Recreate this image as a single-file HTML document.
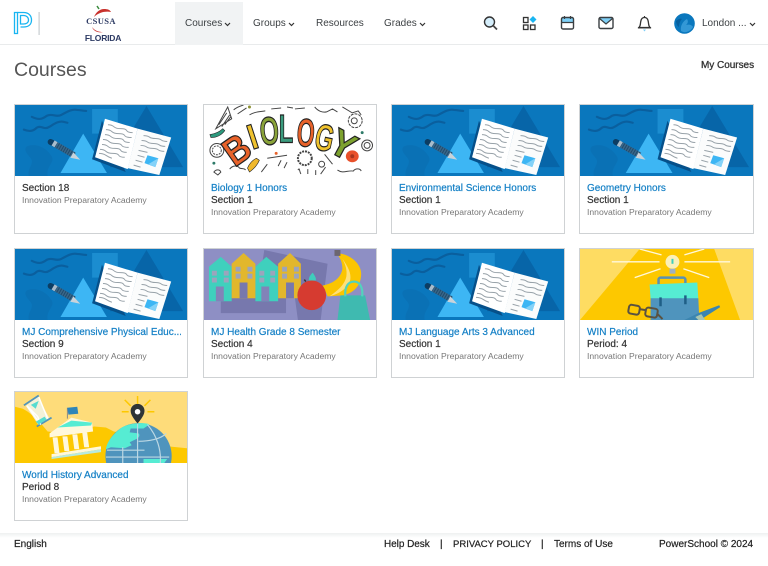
<!DOCTYPE html>
<html><head><meta charset="utf-8"><title>Courses</title>
<style>
*{box-sizing:border-box}
html{background:#fff}
html,body{margin:0;padding:0;width:768px;height:566px;overflow:hidden}
body{background:#fff;font-family:"Liberation Sans",sans-serif;color:#333;filter:blur(.3px)}
.abs,.card,.nav{position:absolute}
.hdr{position:absolute;left:0;top:0;width:768px;height:45px;border-bottom:1px solid #e9ebec;background:#fff}
.nav{top:18px;font-size:10px;line-height:12px;color:#3d4144;white-space:nowrap}
.nav svg{vertical-align:-1px;margin-left:2px}
.card{width:174px;height:130px;border:1px solid #cfd2d4;background:#fff;overflow:hidden}
.card>svg{position:absolute;left:0;top:0;width:172px;height:71px;display:block}
.t{position:absolute;left:7px;right:6px;font-size:10px;line-height:12px;white-space:nowrap;overflow:hidden}
.n{color:#1580c6;top:78px;-webkit-text-stroke:.2px #1580c6}
.s{color:#333;top:90px;-webkit-text-stroke:.2px #333}
.i{color:#777;top:101px;font-size:8.6px}
.f{position:absolute;top:539px;font-size:10px;line-height:12px;color:#222;white-space:nowrap;-webkit-text-stroke:.2px #222}
</style></head><body>
<svg width="0" height="0" style="position:absolute"><defs>
<symbol id="book" viewBox="0 0 174 72">
<rect width="174" height="72" fill="#0a77bd"/>
<path d="M12 42c10-4 20 2 25 10 4 6-6 10-4 20H14c-2-8 6-12 2-18-3-4-8-8-4-12z" fill="#0a71b5"/>
<path d="M78 4h26v25H78z" fill="#1b8dd0"/>
<path d="M133 1l37 62H96z" fill="#0765a8"/>
<path d="M69 29l24 40H46z" fill="#3db6f4"/>
<g fill="none" stroke="#0a5f9e" stroke-width="2.200" stroke-linecap="round"><path d="M17 12c6 3 10 3 15-1 6-3 9 2 15-1 7-4 11-6 16-5 3 0 6 1 9 1"/><path d="M9 25c5 2 9 2 13-2 5-3 7 3 13-1 5-3 9-6 14-5l4 1"/></g>
<path d="M41 40l19 11" stroke="#3a6788" stroke-width="6"/><path d="M41 40l19 11" stroke="#1f4a6c" stroke-width="6" stroke-dasharray="1 1.500"/>
<path d="M36 37.500l3 1.500" stroke="#0c3d63" stroke-width="6" stroke-linecap="round"/><path d="M38.500 38.500l3 1.800" stroke="#a9bccb" stroke-width="6"/>
<path d="M59 48l-3 5.500 10 2z" fill="#c9d3da"/>
<path d="M88 16l-10 39 34 13z" fill="#06508a"/>
<path d="M91 14l33 10-10 41-33-12z" fill="#fff"/><path d="M124 24l34 9-12 38-32-7z" fill="#fbfcfc"/>
<g fill="none" stroke="#98a2a9" stroke-width="1"><path d="M94 20q4 0 6 2t7 2 6 2 6 2M92 25q4 0 6 2t7 2 6 2 7 2M91 30q4 0 6 2t7 2 6 2 6 2M89 35q4 0 6 2t7 2 6 2 7 2M88 40q4 0 6 2t7 2 6 2 6 2M86 45q4 0 6 2t7 2 6 2 6 2M85 49q4 0 7 2t6 3"/><path d="M130 31q4 0 6 1.500t6 1.500 6 1.500 6 1.500M128 36q4 0 6 1.500t6 1.500 6 1.500 6 1.500M127 41q4 0 6 1.500t6 1.500 6 1.500 6 1.500M125 46l9 2M124 51l7 2M122 56l7 2M120 61l7 2"/></g>
<path d="M134 51l11 3-3 9-11-4z" fill="#3db6f4"/><path d="M145 54l-3 9-7-3z" fill="#84d2f8"/>
</symbol>
</defs></svg>

<div class="hdr">
<svg class="abs" style="left:13px;top:11px" width="28" height="26" viewBox="0 0 28 26"><g fill="none" stroke="#19b5f1" stroke-width="1.300"><path d="M1.500 1.500v21h3V1.500z"/><path d="M4.500 1.500h6c5 0 8 3 8 7.500s-3 7-8 7h-3"/><path d="M7.500 4.500h3c3 0 5 2 5 4.500s-2 4-5 4h-3z"/></g><rect x="25.500" y="1" width="1.200" height="23" fill="#c7cdd0"/></svg>
<svg class="abs" style="left:82px;top:4px" width="42" height="38" viewBox="0 0 42 38"><path d="M12 13c2-5 6-8 10-8 4 0 6 1 7 3-5-1-12 0-17 5z" fill="#c8312c"/><path d="M15 2l2 3" stroke="#3a8a3c" stroke-width="1.500"/><path d="M10 23c3 4 7 5 11 5-4 1-9 0-11-5z" fill="#c8312c"/><text x="19" y="20" font-family="'Liberation Serif',serif" font-size="8.500" font-weight="700" letter-spacing=".4" text-anchor="middle" fill="#2c3a63">CSUSA</text><text x="21" y="37" font-size="8.500" font-weight="700" text-anchor="middle" fill="#2c3a63" letter-spacing="-.2">FLORIDA</text></svg>
<div class="abs" style="left:175px;top:2px;width:68px;height:43px;background:#f1f3f4"></div>
<div class="nav" style="left:185px">Courses<svg width="7" height="5" viewBox="0 0 7 5"><path d="M1 1l2.500 2.500L6 1" fill="none" stroke="#333" stroke-width="1.200"/></svg></div>
<div class="nav" style="left:253px">Groups<svg width="7" height="5" viewBox="0 0 7 5"><path d="M1 1l2.500 2.500L6 1" fill="none" stroke="#333" stroke-width="1.200"/></svg></div>
<div class="nav" style="left:316px">Resources</div>
<div class="nav" style="left:384px">Grades<svg width="7" height="5" viewBox="0 0 7 5"><path d="M1 1l2.500 2.500L6 1" fill="none" stroke="#333" stroke-width="1.200"/></svg></div>
<svg class="abs" style="left:482px;top:14px" width="17" height="17" viewBox="0 0 17 17"><circle cx="7.500" cy="8" r="5" fill="#d5eefb" stroke="#333" stroke-width="1.400"/><path d="M11.500 12l3.500 3.500" stroke="#444" stroke-width="1.800"/></svg>
<svg class="abs" style="left:521px;top:15px" width="17" height="16" viewBox="0 0 17 16"><g fill="none" stroke="#333" stroke-width="1.300"><rect x="2.500" y="2.500" width="4.500" height="5"/><rect x="2.500" y="10" width="4.500" height="4.500"/><rect x="9.500" y="10" width="4.500" height="4.500"/></g><path d="M12 1l3.500 3.500L12 8 8.500 4.500z" fill="#19b5f1"/></svg>
<svg class="abs" style="left:560px;top:15px" width="15" height="16" viewBox="0 0 15 16"><rect x="1" y="3" width="13" height="5" fill="#7fd0f7"/><rect x="1.500" y="2.500" width="12" height="11.500" rx="1.500" fill="none" stroke="#3a3f42" stroke-width="1.400"/><path d="M1.500 7.500h12M4.500 1v3M10.500 1v3" stroke="#3a3f42" stroke-width="1.200"/></svg>
<svg class="abs" style="left:598px;top:16px" width="16" height="14" viewBox="0 0 16 14"><path d="M1 2l7 6 7-6z" fill="#7fd0f7"/><rect x="1" y="1.500" width="14" height="11" rx="1.500" fill="none" stroke="#3a3f42" stroke-width="1.400"/><path d="M1.500 2.500L8 8l6.500-5.500" fill="none" stroke="#3a3f42" stroke-width="1.200"/></svg>
<svg class="abs" style="left:637px;top:15px" width="15" height="17" viewBox="0 0 15 17"><path d="M2 12.500c2-2 1-4 2-7 .5-2 2-3 3.500-3s3 1 3.500 3c1 3 0 5 2 7z" fill="none" stroke="#333" stroke-width="1.300"/><path d="M1 12.800h13" stroke="#333" stroke-width="1.300"/><path d="M6 14.500h3L7.500 16.500z" fill="#7fd0f7"/><path d="M7.500 1v1.500" stroke="#333" stroke-width="1.200"/></svg>
<svg class="abs" style="left:674px;top:13px" width="21" height="21" viewBox="0 0 21 21"><circle cx="10.500" cy="10.500" r="10.300" fill="#0a77bd"/><path d="M7 18c-1-5 2-10 6-12 2 3 0 5-1 6 3-1 6 0 7 2-2 4-8 7-12 4z" fill="#3398d6"/><path d="M2 8c2-2 5-3 6-2-2 2-3 5-3 8-2-1-3-4-3-6z" fill="#07609f"/></svg>
<div class="nav" style="left:702px">London ...</div>
<svg class="abs" style="left:749px;top:22px" width="7" height="5" viewBox="0 0 7 5"><path d="M1 1l2.500 2.500L6 1" fill="none" stroke="#333" stroke-width="1.200"/></svg>
</div>

<div class="abs" style="left:14px;top:59px;font-size:19.500px;line-height:23px;color:#555">Courses</div>
<div class="abs" style="left:701px;top:60px;font-size:10px;line-height:12px;color:#333;-webkit-text-stroke:.3px #333;letter-spacing:-.03px">My Courses</div>

<div class="card" style="left:14px;top:104px"><svg viewBox="0 0 174 72" preserveAspectRatio="none"><use href="#book"/></svg><div class="t s" style="top:78px">Section 18</div><div class="t i" style="top:89px">Innovation Preparatory Academy</div></div>

<div class="card" style="left:203px;top:104px"><svg viewBox="0 0 174 72" preserveAspectRatio="none"><rect width="174" height="72" fill="#fff"/>
<g fill="none" stroke="#444" stroke-width="1">
<path d="M12 24L24 2l4 12-16 10zM15 20l8-12M18 22l8-12M21 20l6-8"/><path d="M30 5c3-3 7-4 10-5M34 9l9-6M46 10c5-3 9-3 16-4M68 4l10-1M84 2l6 1M92 4l10-1M112 2c3 4 8 6 12 5l6-3 5 3M140 2l10 6 6-2 3 4"/>
<circle cx="13" cy="46" r="7"/><circle cx="13" cy="46" r="4.500" stroke-dasharray="2 1"/>
<circle cx="153" cy="16" r="7" stroke-dasharray="3 1"/><circle cx="152" cy="16" r="3"/><circle cx="165" cy="41" r="5.500"/><circle cx="165" cy="41" r="3"/>
<path d="M26 65c3-4 8-4 10-1 3 1 5 0 6 2M10 68c2-3 6-3 7 0l-3 3zM64 54l20-3M58 68l6-8M75 62l3-6M81 64l3-6M95 66c2-3 1 0 3 4M105 65v5M113 66v5"/><ellipse cx="102" cy="54" rx="7" ry="7" stroke-width="2" stroke-dasharray="2 1"/><circle cx="119" cy="60" r="3"/><path d="M122 50l8 10M118 70l5-7M135 66c6 4 10 0 16 1 2-3 7-3 8 0"/></g>
<g font-family="'Liberation Sans',sans-serif" font-weight="700" stroke="#222" stroke-width="1.300" text-anchor="middle" font-size="40">
<text y="14" transform="translate(33,45) rotate(-35) scale(.85,1)" fill="#e8622a">B</text>
<text y="14" transform="translate(49,32) rotate(-18) scale(.8,.9)" fill="#efc22e">I</text>
<text y="14" transform="translate(66,26) rotate(-5) scale(.62,1)" fill="#8aa33a">O</text>
<text y="14" transform="translate(83,24) scale(.6,1)" fill="#3b9c7e">L</text>
<text y="14" transform="translate(103,28) rotate(4) scale(.58,1)" fill="#e8622a">O</text>
<text y="14" transform="translate(122,33) rotate(12) scale(.6,.95)" fill="#efc22e">G</text>
<text y="14" transform="translate(141,40) rotate(28) scale(.95,.95)" fill="#7da22f">Y</text></g>
<path d="M6 30c6-1 10-3 13-6l2 2c-3 4-8 7-14 7z" fill="#2d9a7e" stroke="#222" stroke-width=".6"/><path d="M44 64c2-5 5-8 9-10l3 2c-2 5-5 8-10 12z" fill="#f0b82b" stroke="#222" stroke-width=".6"/>
<ellipse cx="150" cy="52" rx="6.500" ry="6" fill="#e8502a"/><circle cx="150" cy="52" r="2" fill="#a8341c"/><circle cx="10" cy="59" r="1.500" fill="#2d7a68"/><circle cx="73" cy="49" r="1.500" fill="#e8622a"/><circle cx="160" cy="28" r="1.500" fill="#2d7a68"/><circle cx="46" cy="2" r="1.500" fill="#8a8f30"/></svg>
<div class="t n">Biology 1 Honors</div><div class="t s">Section 1</div><div class="t i">Innovation Preparatory Academy</div></div>

<div class="card" style="left:391px;top:104px"><svg viewBox="0 0 174 72" preserveAspectRatio="none"><use href="#book"/></svg><div class="t n">Environmental Science Honors</div><div class="t s">Section 1</div><div class="t i">Innovation Preparatory Academy</div></div>
<div class="card" style="left:579px;top:104px;width:175px"><svg viewBox="0 0 174 72" preserveAspectRatio="none" style="width:173px"><use href="#book"/></svg><div class="t n">Geometry Honors</div><div class="t s">Section 1</div><div class="t i">Innovation Preparatory Academy</div></div>

<div class="card" style="left:14px;top:248px"><svg viewBox="0 0 174 72" preserveAspectRatio="none"><use href="#book"/></svg><div class="t n">MJ Comprehensive Physical Educ...</div><div class="t s">Section 9</div><div class="t i">Innovation Preparatory Academy</div></div>

<div class="card" style="left:203px;top:248px"><svg viewBox="0 0 174 72" preserveAspectRatio="none"><rect width="174" height="72" fill="#8e8fc4"/>
<path d="M17 42h66v23H17zM61 1l64 14-7 57H95l-3-22-37-10z" fill="#7778ad"/>
<g fill="#3fd0bd"><path d="M5 18L17 8l11 10v35H5z"/><path d="M52 18L63 8l12 10v35H52z"/></g>
<g fill="#e2b72c"><path d="M28 15L40 4l12 11v35H28z"/><path d="M75 15L87 4l11 11v35H75z"/></g>
<g fill="#9ca4bc"><path d="M8 22h5v5H8zM20 22h5v5h-5zM8 29h5v5H8zM20 29h5v5h-5zM56 22h5v5h-5zM67 22h5v5h-5zM56 29h5v5h-5zM67 29h5v5h-5zM32 18h5v5h-5zM44 18h5v5h-5zM32 25h5v5h-5zM44 25h5v5h-5zM79 18h5v5h-5zM91 18h5v5h-5zM79 25h5v5h-5zM91 25h5v5h-5z"/></g>
<g fill="#8283b8"><path d="M12 38h8v15h-8zM58 38h8v15h-8z"/></g><g fill="#7778ad"><path d="M36 34h8v16h-8zM83 34h8v16h-8z"/></g>
<path d="M134 4c14 1 25 11 25 21 0 11-6 19-18 22l-16 1c-1-3-3-7-5-11 12-2 19-9 20-17 0-6-2-11-6-16z" fill="#fbc500"/>
<path d="M140 10c6 8 9 15 8 21-2 8-10 14-21 17 7-5 15-11 17-20 1-7-1-12-4-18z" fill="#fde07a"/>
<rect x="132" y="1" width="6" height="6" fill="#6c6670"/>
<path d="M135 72l3-25h25l5 25z" fill="#3fbab0"/><path d="M143 48c-1-10 3-15 9-15s9 7 8 15" fill="none" stroke="#52d3bd" stroke-width="2.200"/>
<ellipse cx="109" cy="47" rx="14.500" ry="15" fill="#d63b30"/><path d="M106 32c0-4 2-6 4-8 2 3 4 6 3 8z" fill="#3fcdbc"/><path d="M103 33l-1.500-2" stroke="#333" stroke-width="1.500"/></svg>
<div class="t n">MJ Health Grade 8 Semester</div><div class="t s">Section 4</div><div class="t i">Innovation Preparatory Academy</div></div>

<div class="card" style="left:391px;top:248px"><svg viewBox="0 0 174 72" preserveAspectRatio="none"><use href="#book"/></svg><div class="t n">MJ Language Arts 3 Advanced</div><div class="t s">Section 1</div><div class="t i">Innovation Preparatory Academy</div></div>

<div class="card" style="left:579px;top:248px;width:175px"><svg viewBox="0 0 174 72" preserveAspectRatio="none" style="width:173px"><rect width="174" height="72" fill="#fedc62"/><path d="M60 0L135 0l26 72H0z" fill="#fdc800"/>
<g stroke="#fff8dc" stroke-width="1.300"><path d="M60 0l22 6M32 13h48M55 29l26-9M105 6l20-6M105 13h46M104 20l26 9"/></g>
<circle cx="93" cy="13" r="7" fill="#fbf0b8"/><rect x="90" y="20" width="6" height="5" fill="#9fb0c0"/><path d="M93 10v5" stroke="#3fcdbc" stroke-width="2"/>
<path d="M79 36v-5c0-1 1-2 2-2h23c1 0 2 1 2 2v4" fill="none" stroke="#5a91b2" stroke-width="2.500"/>
<path d="M70 36l48-2 1 17H71z" fill="#56ecd3"/><path d="M71 50h48l1 22H71z" fill="#4f94bd"/>
<path d="M81 49v9M106 47v9" stroke="#1f5f86" stroke-width="2.500"/>
<g fill="none" stroke="#5a5240" stroke-width="2"><rect x="49" y="57" width="11" height="9" rx="2.500" transform="rotate(10 54 61)"/><rect x="66" y="60" width="12" height="9" rx="2.500" transform="rotate(10 72 64)"/><path d="M60 61l6 1M78 66l5 5"/></g>
<path d="M105 72l14-7 21-8 1 2-14 9-6 4z" fill="#3b85b0"/><path d="M116 69l6-3 4 6h-7z" fill="#a9c5b0"/></svg>
<div class="t n">WIN Period</div><div class="t s">Period: 4</div><div class="t i">Innovation Preparatory Academy</div></div>

<div class="card" style="left:14px;top:391px"><svg viewBox="0 0 174 72" preserveAspectRatio="none"><rect width="174" height="72" fill="#fedc7a"/><path d="M0 15l8 2 5 3 10 8 10 12 20 2 27-7 12 1 8 4 10 2 30 8 10 3 4 2 20 2v15H0z" fill="#fdc800"/>
<path d="M11 14l12-9 12 22-11 7z" fill="#f3f1d8"/><path d="M9 13.500l15-10M22 35l15-9" stroke="#4f94bd" stroke-width="1.800"/><path d="M12 14l2 2 9 9 3 8zM24 5l9 22" fill="none" stroke="#fff" stroke-width="1.500"/><path d="M16 13l8-4-3 8zM21 30l9-5 2 3-8 5z" fill="#56dcd0"/>
<path d="M53 16v11" stroke="#888" stroke-width="1"/><path d="M53 16l10-1 1 7-10 1z" fill="#2f85b8"/>
<path d="M35 42l22-16 21 5 1 9-44 6z" fill="#fff8dc"/><path d="M43 36l14-7 21 2-1 3z" fill="#56ecd3"/>
<g fill="#fff8dc"><path d="M38 46h5l2 16h-5z"/><path d="M48 45h5l2 15h-5z"/><path d="M58 43h5l2 15h-5z"/><path d="M68 41h5l2 15h-5z"/></g><path d="M37 63l50-8v3l-50 8z" fill="#fff8dc"/><path d="M37 66l50-8 0 3-50 7z" fill="#b7eadf"/>
<circle cx="125" cy="65" r="33.500" fill="#4f94bd"/>
<path d="M108 36c6-4 24-6 28-3l-6 4h-13l-1 4 9 1c2 2 0 5-3 6l-6 3 2 3-7 3-14-1-5 2c1-8 8-16 16-22zM130 68h24l-3 4h-21z" fill="#56ecd3"/>
<rect x="91" y="68" width="68" height="2.500" fill="#fdc800" opacity="0"/>
<g fill="none" stroke="#bcd8e4" stroke-width="1.200"><path d="M124 32v40M93 59h38M109 56v16M134 33c10 12 14 26 13 39M125 50c10 0 22-2 28-8M92 66h64"/></g>
<path d="M124 32c-4-5-7-9-7-13a7 7 0 0114 0c0 4-3 8-7 13z" fill="#2f3436"/><circle cx="124" cy="20" r="2.800" fill="#fff"/>
<g stroke="#fdc800" stroke-width="1.500"><path d="M124 4v8M111 8l6 6M137 8l-6 6M108 20h7M134 20h7"/></g></svg>
<div class="t n">World History Advanced</div><div class="t s">Period 8</div><div class="t i">Innovation Preparatory Academy</div></div>

<div class="abs" style="left:0;top:533px;width:768px;height:33px;background:linear-gradient(#eef0f1,#fff 5px)"></div>
<div class="f" style="left:14px">English</div>
<div class="f" style="left:384px;letter-spacing:-.05px">Help Desk</div>
<div class="f" style="left:440px">|</div>
<div class="f" style="left:453px;font-size:9.500px">PRIVACY POLICY</div>
<div class="f" style="left:541px">|</div>
<div class="f" style="left:554px">Terms of Use</div>
<div class="f" style="left:659px">PowerSchool © 2024</div>
</body></html>
